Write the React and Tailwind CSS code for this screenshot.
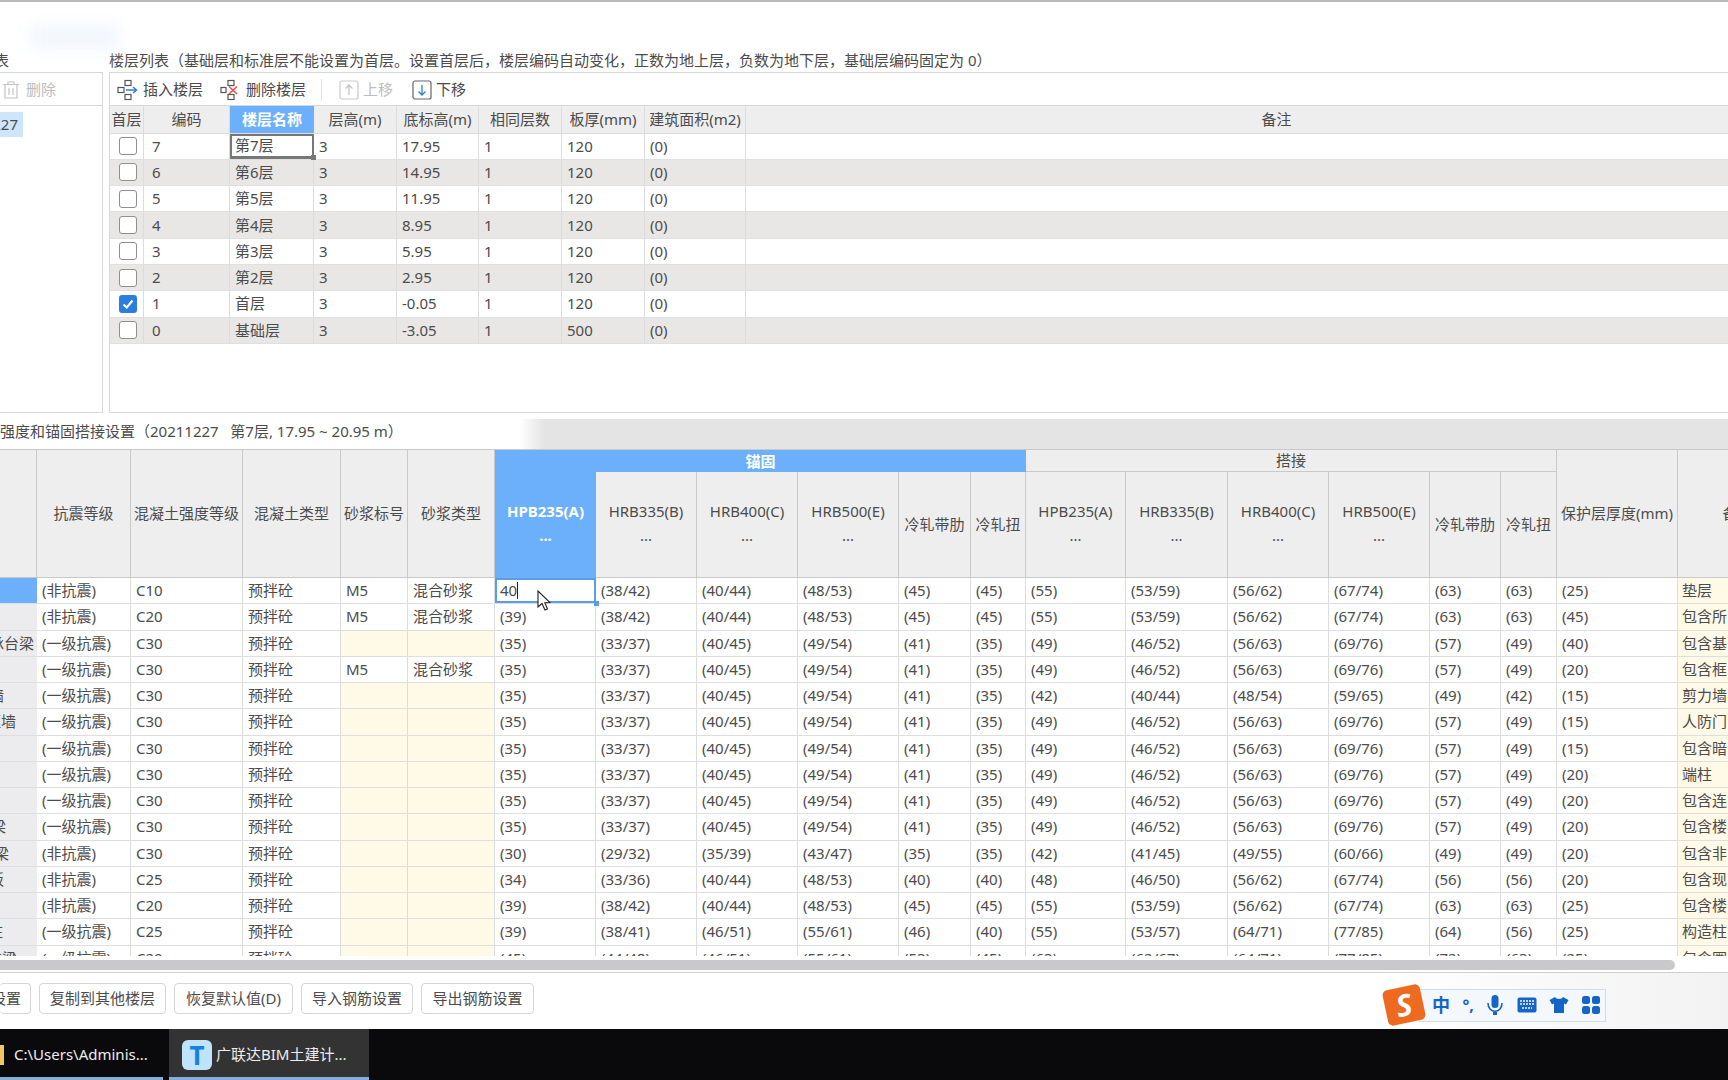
import React from 'react'

const floors = [
  ['7', '第7层', '17.95', '120'],
  ['6', '第6层', '14.95', '120'],
  ['5', '第5层', '11.95', '120'],
  ['4', '第4层', '8.95', '120'],
  ['3', '第3层', '5.95', '120'],
  ['2', '第2层', '2.95', '120'],
  ['1', '首层', '-0.05', '120'],
  ['0', '基础层', '-3.05', '500'],
]

const A1 = ['(38/42)', '(40/44)', '(48/53)', '(45)', '(45)']
const L1 = ['(55)', '(53/59)', '(56/62)', '(67/74)', '(63)', '(63)']
const A2 = ['(33/37)', '(40/45)', '(49/54)', '(41)', '(35)']
const L2 = ['(49)', '(46/52)', '(56/63)', '(69/76)', '(57)', '(49)']
const L3 = ['(42)', '(40/44)', '(48/54)', '(59/65)', '(49)', '(42)']
const one = '(一级抗震)'
const non = '(非抗震)'

// name, end = right padding so the clipped name shows as in the picture
const rows = [
  { name: '', end: '', s: non, c: 'C10', m: 'M5', t: '混合砂浆', a0: '40', a: A1, l: L1, p: '(25)', d: '垫层' },
  { name: '', end: '', s: non, c: 'C20', m: 'M5', t: '混合砂浆', a0: '(39)', a: A1, l: L1, p: '(45)', d: '包含所' },
  { name: '基础梁/承台梁', end: 'pr-[3px]', s: one, c: 'C30', a0: '(35)', a: A2, l: L2, p: '(40)', d: '包含基' },
  { name: '', end: '', s: one, c: 'C30', m: 'M5', t: '混合砂浆', a0: '(35)', a: A2, l: L2, p: '(20)', d: '包含框' },
  { name: '剪力墙', end: 'pr-[33px]', s: one, c: 'C30', a0: '(35)', a: A2, l: L3, p: '(15)', d: '剪力墙' },
  { name: '人防门框墙', end: 'pr-[21px]', s: one, c: 'C30', a0: '(35)', a: A2, l: L2, p: '(15)', d: '人防门' },
  { name: '', end: '', s: one, c: 'C30', a0: '(35)', a: A2, l: L2, p: '(15)', d: '包含暗' },
  { name: '', end: '', s: one, c: 'C30', a0: '(35)', a: A2, l: L2, p: '(20)', d: '端柱' },
  { name: '', end: '', s: one, c: 'C30', a0: '(35)', a: A2, l: L2, p: '(20)', d: '包含连' },
  { name: '框架梁', end: 'pr-[31px]', s: one, c: 'C30', a0: '(35)', a: A2, l: L2, p: '(20)', d: '包含楼' },
  { name: '非框架梁', end: 'pr-[28px]', s: non, c: 'C30', a0: '(30)', a: ['(29/32)', '(35/39)', '(43/47)', '(35)', '(35)'], l: ['(42)', '(41/45)', '(49/55)', '(60/66)', '(49)', '(49)'], p: '(20)', d: '包含非' },
  { name: '现浇板', end: 'pr-[33px]', s: non, c: 'C25', a0: '(34)', a: ['(33/36)', '(40/44)', '(48/53)', '(40)', '(40)'], l: ['(48)', '(46/50)', '(56/62)', '(67/74)', '(56)', '(56)'], p: '(20)', d: '包含现' },
  { name: '', end: '', s: non, c: 'C20', a0: '(39)', a: A1, l: L1, p: '(25)', d: '包含楼' },
  { name: '构造柱', end: 'pr-[34px]', s: one, c: 'C25', a0: '(39)', a: ['(38/41)', '(46/51)', '(55/61)', '(46)', '(40)'], l: ['(55)', '(53/57)', '(64/71)', '(77/85)', '(64)', '(56)'], p: '(25)', d: '构造柱' },
  { name: '圈梁/过梁', end: 'pr-[20px]', s: one, c: 'C20', a0: '(45)', a: ['(44/48)', '(46/51)', '(55/61)', '(53)', '(45)'], l: ['(63)', '(62/67)', '(64/71)', '(77/85)', '(72)', '(63)'], p: '(25)', d: '包含圈' },
]

const topCols = 'grid grid-cols-[34px_86px_84px_83px_82px_83px_83px_101px_1062px]'
const lowCols = 'grid-cols-[37px_94px_112px_98px_67px_87px_101px_101px_101px_101px_72px_55px_100px_102px_101px_101px_71px_56px_121px_120px]'
const cell = 'flex items-center border-r border-[#dcdcdc] pl-[5px] overflow-hidden whitespace-nowrap'

const Check = ({ on }) => (
  <div className={on ? 'w-[18px] h-[18px] rounded-[3px] bg-[#2b7de0] flex items-center justify-center' : 'w-[18px] h-[18px] rounded-[3px] border border-[#8f8f8f] bg-white'}>
    {on && (
      <svg width="14" height="14" viewBox="0 0 14 14" fill="none" stroke="white" strokeWidth="2.2"><path d="M2.5 7.5 L5.8 10.5 L11.5 3.5" /></svg>
    )}
  </div>
)

const InsertIcon = () => (
  <svg width="22" height="22" viewBox="0 0 22 22" fill="none" strokeWidth="1.2">
    <rect x="8" y="1.5" width="6" height="5" stroke="#555" />
    <rect x="1" y="8.5" width="6" height="5" stroke="#555" />
    <rect x="8" y="15.5" width="6" height="5" stroke="#555" />
    <path d="M9 11 H19 M16 8 L19.5 11 L16 14" stroke="#2f80d8" strokeWidth="1.5" />
  </svg>
)

const DeleteIcon = () => (
  <svg width="22" height="22" viewBox="0 0 22 22" fill="none" strokeWidth="1.2">
    <rect x="8" y="1.5" width="6" height="5" stroke="#555" />
    <rect x="1" y="8.5" width="5" height="5" stroke="#555" />
    <rect x="8" y="15.5" width="6" height="5" stroke="#555" />
    <path d="M9 7.5 L17 15 M17 7.5 L9 15" stroke="#e2544c" strokeWidth="1.6" />
  </svg>
)

const MoveIcon = ({ up }) => (
  <svg width="20" height="20" viewBox="0 0 20 20" fill="none">
    <rect x="1" y="1" width="18" height="18" rx="2" stroke={up ? '#c9c9c9' : '#666'} strokeWidth="1.2" />
    <path d={up ? 'M10 15 V5 M6.5 8.5 L10 5 L13.5 8.5' : 'M10 5 V15 M6.5 11.5 L10 15 L13.5 11.5'} stroke={up ? '#c4c4c4' : '#2f80d8'} strokeWidth="1.3" />
  </svg>
)

const TrashIcon = () => (
  <svg width="18" height="20" viewBox="0 0 18 20" fill="none" stroke="#c4c4c4" strokeWidth="1.2">
    <path d="M1 4.5 H17 M6 4 V2 H12 V4 M3 5 V18 H15 V5 M7 8 V15 M11 8 V15" />
  </svg>
)

const Cursor = () => (
  <svg className="absolute left-[40px] top-[10px]" width="14" height="22" viewBox="0 0 14 22">
    <path d="M1 1 V17 L5 13.5 L8 20 L10.5 19 L7.8 12.8 L13 12.5 Z" fill="white" stroke="#222" strokeWidth="1.1" />
  </svg>
)

function ToolBtn({ icon, label, faded }) {
  return (
    <div className={faded ? 'flex items-center gap-[4px] text-[#bdbdbd]' : 'flex items-center gap-[4px] text-[#4a4a4a]'}>
      {icon}
      <span>{label}</span>
    </div>
  )
}

function FloorTable() {
  const heads = ['首层', '编码', '楼层名称', '层高(m)', '底标高(m)', '相同层数', '板厚(mm)', '建筑面积(m2)', '备注']
  return (
    <div className="overflow-hidden">
      <div className={`${topCols} h-[27.5px] bg-[#eeeeef] border-b border-[#dcdcdc]`}>
        {heads.map((h) => (
          <div key={h} className={h === '楼层名称' ? 'flex items-center justify-center bg-[#6cb0fb] text-white font-bold' : 'flex items-center justify-center border-r border-[#dcdcdc] whitespace-nowrap'}>{h}</div>
        ))}
      </div>
      {floors.map((f, i) => (
        <div key={f[0]} className={i % 2 ? `${topCols} h-[26.3px] bg-[#e9e7e5] border-b border-[#e0e0e0]` : `${topCols} h-[26.3px] bg-white border-b border-[#e0e0e0]`}>
          <div className="flex items-center justify-center pl-[2px] border-r border-[#dcdcdc]"><Check on={f[0] === '1'} /></div>
          <div className={`${cell} pl-[8px]`}>{f[0]}</div>
          {i === 0 ? (
            <div className="relative flex items-center border-2 border-b-[3px] border-[#777] pl-[3px]">
              {f[1]}
              <span className="absolute right-[-4px] bottom-[-4px] w-[5px] h-[5px] bg-[#777]"></span>
            </div>
          ) : (
            <div className={cell}>{f[1]}</div>
          )}
          <div className={cell}>3</div>
          <div className={cell}>{f[2]}</div>
          <div className={cell}>1</div>
          <div className={cell}>{f[3]}</div>
          <div className={cell}>(0)</div>
          <div className={cell}></div>
        </div>
      ))}
    </div>
  )
}

const headCell = 'flex items-center justify-center border-r border-b border-[#c9c9c9] whitespace-nowrap overflow-hidden'

function Grade({ label, pos, active }) {
  return (
    <div className={active ? `${pos} flex flex-col items-center justify-center pb-[2px] bg-[#6cb0fb] text-white font-bold border-b border-[#6cb0fb]` : `${pos} flex flex-col items-center justify-center pb-[2px] border-r border-b border-[#c9c9c9]`}>
      <span>{label}</span>
      <span className="mt-[9px]">...</span>
    </div>
  )
}

function SettingsTable() {
  return (
    <div className="h-[507px] overflow-hidden">
      <div className={`grid ${lowCols} grid-rows-[22px_106px] bg-[#eeeeef] border-t border-[#c9c9c9]`}>
        <div className={`${headCell} row-span-2 col-start-1`}></div>
        <div className={`${headCell} row-span-2 col-start-2`}>抗震等级</div>
        <div className={`${headCell} row-span-2 col-start-3`}>混凝土强度等级</div>
        <div className={`${headCell} row-span-2 col-start-4`}>混凝土类型</div>
        <div className={`${headCell} row-span-2 col-start-5`}>砂浆标号</div>
        <div className={`${headCell} row-span-2 col-start-6`}>砂浆类型</div>
        <div className="col-start-7 col-span-6 row-start-1 flex items-center justify-center bg-[#6cb0fb] text-white font-bold">锚固</div>
        <div className="col-start-13 col-span-6 row-start-1 flex items-center justify-center border-r border-b border-[#c9c9c9]">搭接</div>
        <div className={`${headCell} row-span-2 col-start-19`}>保护层厚度(mm)</div>
        <div className={`${headCell} row-span-2 col-start-20`}>备注</div>
        <Grade pos="row-start-2 col-start-7" label="HPB235(A)" active />
        <Grade pos="row-start-2 col-start-8" label="HRB335(B)" />
        <Grade pos="row-start-2 col-start-9" label="HRB400(C)" />
        <Grade pos="row-start-2 col-start-10" label="HRB500(E)" />
        <div className={`${headCell} row-start-2 col-start-11`}>冷轧带肋</div>
        <div className={`${headCell} row-start-2 col-start-12`}>冷轧扭</div>
        <Grade pos="row-start-2 col-start-13" label="HPB235(A)" />
        <Grade pos="row-start-2 col-start-14" label="HRB335(B)" />
        <Grade pos="row-start-2 col-start-15" label="HRB400(C)" />
        <Grade pos="row-start-2 col-start-16" label="HRB500(E)" />
        <div className={`${headCell} row-start-2 col-start-17`}>冷轧带肋</div>
        <div className={`${headCell} row-start-2 col-start-18`}>冷轧扭</div>
      </div>
      {rows.map((r, i) => (
        <div key={i} className={`grid ${lowCols} h-[26.25px] border-b border-[#dedede]`}>
          <div className={i === 0 ? 'bg-[#6cb0fb]' : `bg-[#ececee] flex justify-end items-center overflow-hidden whitespace-nowrap ${r.end}`}>{r.name}</div>
          <div className={cell}>{r.s}</div>
          <div className={cell}>{r.c}</div>
          <div className={cell}>预拌砼</div>
          <div className={r.m ? cell : `${cell} bg-[#fff9e8]`}>{r.m}</div>
          <div className={r.t ? cell : `${cell} bg-[#fff9e8]`}>{r.t}</div>
          {i === 0 ? (
            <div className="relative flex items-center border-2 border-[#5a9ee8] pl-[3px]">
              40<span className="w-px h-[17px] bg-[#222]"></span>
              <Cursor />
              <span className="absolute right-[-5px] bottom-[-5px] w-[5px] h-[5px] bg-[#5a9ee8]"></span>
            </div>
          ) : (
            <div className={cell}>{r.a0}</div>
          )}
          {r.a.map((v, j) => <div key={j} className={cell}>{v}</div>)}
          {r.l.map((v, j) => <div key={j} className={cell}>{v}</div>)}
          <div className={cell}>{r.p}</div>
          <div className="flex items-center pl-[4px] bg-[#fff9e8] overflow-hidden whitespace-nowrap">{r.d}</div>
        </div>
      ))}
    </div>
  )
}

function Ime() {
  return (
    <div className="absolute left-[1385px] top-[14px] flex items-center">
      <div className="w-[38px] h-[36px] rounded-[5px] -rotate-12 bg-[#ee6a1f] flex items-center justify-center text-white font-bold text-[30px] leading-none italic z-10">S</div>
      <div className="-ml-[4px] w-[187px] h-[33px] bg-[#f4f7fc] border border-[#d3dbe6] flex items-center justify-between pl-[12px] pr-[5px] text-[#1565c8]">
        <span className="font-bold text-[18px] leading-none">中</span>
        <span className="font-bold text-[16px] leading-none">°,</span>
        <svg width="18" height="22" viewBox="0 0 18 22" fill="#1565c8"><rect x="5.5" y="1" width="7" height="13" rx="3.5" /><path d="M2 9 C2 20 16 20 16 9" fill="none" stroke="#1565c8" strokeWidth="1.6" /><rect x="7" y="18" width="4" height="3" /></svg>
        <svg width="20" height="16" viewBox="0 0 20 16"><rect x="0.5" y="0.5" width="19" height="15" rx="2" fill="#1565c8" /><path d="M3 4 H17 M3 7 H17 M5 11 H15" stroke="#f4f7fc" strokeWidth="1.6" strokeDasharray="2 1" /></svg>
        <svg width="20" height="18" viewBox="0 0 20 18" fill="#1565c8"><path d="M6 1 L0.5 4 L3 8.5 L5 7.5 V17 H15 V7.5 L17 8.5 L19.5 4 L14 1 C13 3.5 7 3.5 6 1 Z" /></svg>
        <svg width="18" height="18" viewBox="0 0 18 18" fill="#1565c8"><rect x="0" y="0" width="8" height="8" rx="2.5" /><rect x="10" y="0" width="8" height="8" rx="2.5" /><rect x="0" y="10" width="8" height="8" rx="2.5" /><rect x="10" y="10" width="8" height="8" rx="2.5" /></svg>
      </div>
    </div>
  )
}

const btn = 'h-[31px] flex items-center justify-center border border-[#d6d6d6] rounded-[4px] bg-white'

export default function App() {
  return (
    <div className="w-[1728px] h-[1080px] overflow-hidden flex flex-col bg-white text-[15px] leading-none text-[#4c4c4c] font-['Noto_Sans','Noto_Sans_CJK_SC',sans-serif]">
      <div className="h-[2px] bg-[#b8b8b8]"></div>
      <div className="h-[46px] pl-[30px] pt-[22px]">
        <div className="w-[90px] h-[26px] bg-[#f2f7fd] blur-sm"></div>
      </div>

      <div className="h-[365px] flex gap-[6px]">
        <div className="w-[103px] flex flex-col">
          <div className="h-[24px] flex items-center -ml-[6px]">表</div>
          <div className="flex-1 border border-l-0 border-[#d8d8d8]">
            <div className="h-[33px] pt-[1px] border-b border-[#d8d8d8] flex items-center gap-[6px] pl-[2px] text-[#bdbdbd]">
              <TrashIcon />
              <span>删除</span>
            </div>
            <div className="mt-[6px] w-[23px] h-[25px] bg-[#cfe5fb] flex items-center justify-end overflow-hidden pr-[5px]">20211227</div>
          </div>
        </div>
        <div className="flex-1 min-w-0 flex flex-col">
          <div className="h-[24px] flex items-center whitespace-nowrap">楼层列表（基础层和标准层不能设置为首层。设置首层后，楼层编码自动变化，正数为地上层，负数为地下层，基础层编码固定为 0）</div>
          <div className="flex-1 border-t border-l border-b border-[#d8d8d8] overflow-hidden">
            <div className="h-[33px] pt-[1px] flex items-center pl-[7px] border-b border-[#d8d8d8]">
              <ToolBtn icon={<InsertIcon />} label="插入楼层" />
              <div className="ml-[17px]"><ToolBtn icon={<DeleteIcon />} label="删除楼层" /></div>
              <div className="ml-[15px] w-px h-[22px] bg-[#e4e4e4]"></div>
              <div className="ml-[17px]"><ToolBtn icon={<MoveIcon up />} label="上移" faded /></div>
              <div className="ml-[19px]"><ToolBtn icon={<MoveIcon />} label="下移" /></div>
            </div>
            <FloorTable />
          </div>
        </div>
      </div>

      <div className="h-[36px] flex">
        <div className="w-[520px] flex items-center whitespace-pre">强度和锚固搭接设置（20211227   第7层, 17.95 ~ 20.95 m）</div>
        <div className="flex-1 mt-[6px] bg-gradient-to-r from-white to-[#e4e4e4] to-[2%]"></div>
      </div>

      <SettingsTable />

      <div className="h-[17px] pt-[4px] border-b border-[#d0d0d0]">
        <div className="w-[1675px] h-[10px] rounded-r-full bg-[#c9c9cc]"></div>
      </div>

      <div className="relative h-[56px] pt-[10px] flex gap-[8px] items-start bg-gradient-to-r from-white from-[80%] to-[#f2f2f2]">
        <div className={`${btn} w-[31px] justify-end pr-[9px] border-l-0 overflow-hidden whitespace-nowrap`}>设置</div>
        <div className={`${btn} w-[127px]`}>复制到其他楼层</div>
        <div className={`${btn} w-[119px]`}>恢复默认值(D)</div>
        <div className={`${btn} w-[112px]`}>导入钢筋设置</div>
        <div className={`${btn} w-[113px]`}>导出钢筋设置</div>
        <Ime />
      </div>

      <div className="flex-1 bg-[#0a0a0c] flex text-[#eeeeee]">
        <div className="w-[163px] pt-[3px] flex items-center border-b-[3px] border-[#7fb0de] gap-[10px]">
          <div className="w-[4px] h-[20px] bg-[#f2c661]"></div>
          <span className="whitespace-nowrap">C:\Users\Adminis...</span>
        </div>
        <div className="ml-[6px] w-[200px] pt-[3px] flex items-center bg-[#333333] border-b-[3px] border-[#7fb0de] pl-[13px] gap-[4px]">
          <div className="w-[30px] h-[30px] rounded-[6px] bg-[#bfe3fb] flex items-center justify-center text-[#1480e0] font-bold text-[26px] leading-none">T</div>
          <span className="whitespace-nowrap">广联达BIM土建计...</span>
        </div>
      </div>
    </div>
  )
}
